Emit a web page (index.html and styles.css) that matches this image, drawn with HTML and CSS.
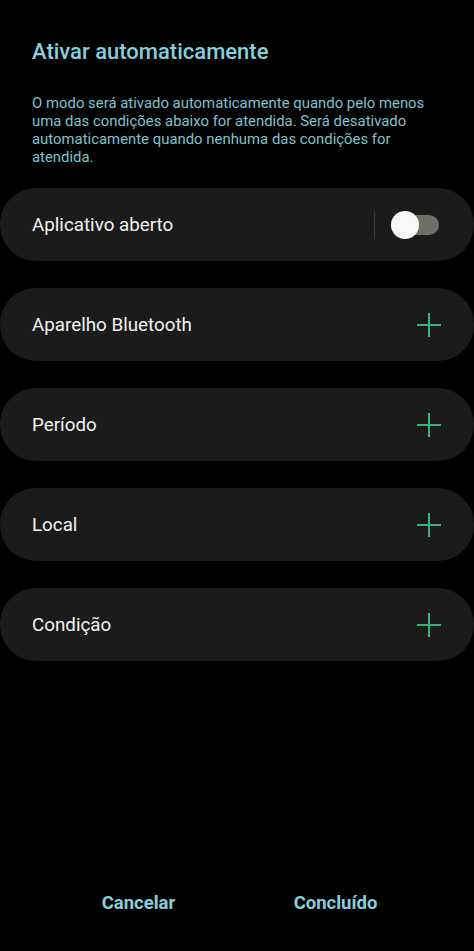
FILE: index.html
```html
<!DOCTYPE html>
<html lang="pt-BR">
<head>
<meta charset="utf-8">
<link rel="stylesheet" href="styles.css">
</head>
<body>
<div class="screen">
  <header class="header">
    <h1 class="title">Ativar automaticamente</h1>
    <p class="desc">O modo será ativado automaticamente quando pelo menos uma das condições abaixo for atendida. Será desativado automaticamente quando nenhuma das condições for atendida.</p>
  </header>
  <div class="list">
    <div class="card">
      <span class="label">Aplicativo aberto</span>
      <div class="switch-wrap">
        <span class="divider"></span>
        <span class="switch"><span class="thumb"></span></span>
      </div>
    </div>
    <div class="card">
      <span class="label">Aparelho Bluetooth</span>
      <svg class="plus" width="26" height="26" viewBox="0 0 26 26"><path d="M13 1v24M1 13h24" stroke="#34b57c" stroke-width="2"/></svg>
    </div>
    <div class="card">
      <span class="label">Período</span>
      <svg class="plus" width="26" height="26" viewBox="0 0 26 26"><path d="M13 1v24M1 13h24" stroke="#34b57c" stroke-width="2"/></svg>
    </div>
    <div class="card">
      <span class="label">Local</span>
      <svg class="plus" width="26" height="26" viewBox="0 0 26 26"><path d="M13 1v24M1 13h24" stroke="#34b57c" stroke-width="2"/></svg>
    </div>
    <div class="card">
      <span class="label">Condição</span>
      <svg class="plus" width="26" height="26" viewBox="0 0 26 26"><path d="M13 1v24M1 13h24" stroke="#34b57c" stroke-width="2"/></svg>
    </div>
  </div>
  <footer class="actions">
    <button class="btn">Cancelar</button>
    <button class="btn">Concluído</button>
  </footer>
</div>
</body>
</html>
```
FILE: styles.css
```css
* { box-sizing: border-box; }
html, body { margin: 0; padding: 0; background: #000; }
body { font-family: Roboto, "Noto Sans", sans-serif; }
.screen {
  width: 474px;
  height: 951px;
  display: flex;
  flex-direction: column;
  background: #000;
}
.header { padding: 38px 32px 0 32px; }
.title {
  margin: 0;
  font-size: 22px;
  line-height: 28px;
  font-weight: 500;
  color: #86d0de;
}
.desc {
  margin: 28px 0 0 0;
  font-size: 14.9px;
  line-height: 18px;
  color: #7ec3ce;
  padding-right: 12px;
}
.list {
  margin-top: 22px;
  display: flex;
  flex-direction: column;
  gap: 27px;
}
.card {
  height: 73px;
  border-radius: 36px;
  background: #1b1b1b;
  display: flex;
  align-items: center;
  justify-content: space-between;
  padding: 0 32px 0 32px;
}
.label {
  font-size: 18.8px;
  color: #f1f1f1;
}
.switch-wrap { display: flex; align-items: center; gap: 16px; margin-right: 3px; }
.divider { width: 1px; height: 28px; background: #3a3a3a; }
.switch {
  position: relative;
  width: 48px;
  height: 20px;
  border-radius: 10px;
  background: #707069;
}
.thumb {
  position: absolute;
  left: 0;
  top: -4px;
  width: 28px;
  height: 28px;
  border-radius: 50%;
  background: #f7f7f7;
}
.actions {
  margin-top: auto;
  height: 60px;
  display: flex;
  justify-content: space-around;
  align-items: flex-start;
  padding: 0 40px;
}
.btn {
  background: none;
  border: 0;
  font-family: Roboto, sans-serif;
  font-size: 18.5px;
  font-weight: 700;
  color: #86cfdf;
  padding: 0;
  line-height: 24px;
  width: 160px;
}
```
